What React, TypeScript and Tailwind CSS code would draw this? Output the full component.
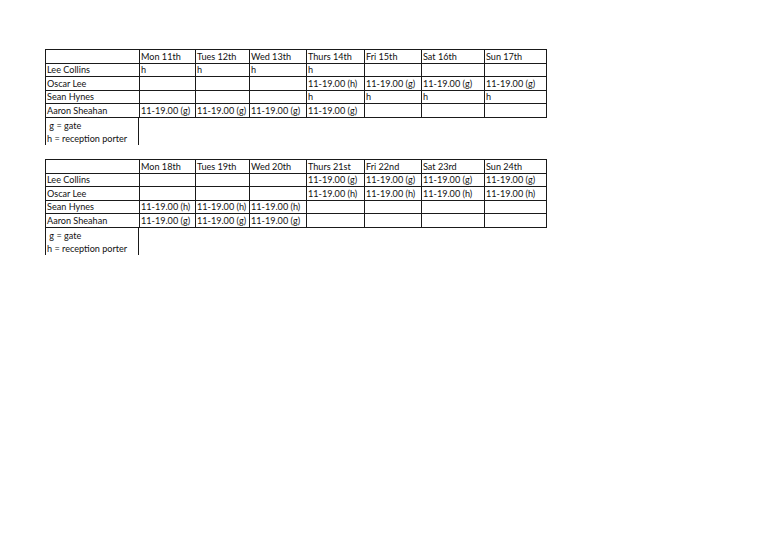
const widths = [94, 56, 54, 57, 58, 57, 63, 62];

type Week = {
  days: string[];
  rows: { name: string; cells: string[] }[];
};

const weeks: Week[] = [
  {
    days: ["Mon 11th", "Tues 12th", "Wed 13th", "Thurs 14th", "Fri 15th", "Sat 16th", "Sun 17th"],
    rows: [
      { name: "Lee Collins", cells: ["h", "h", "h", "h", "", "", ""] },
      { name: "Oscar Lee", cells: ["", "", "", "11-19.00 (h)", "11-19.00 (g)", "11-19.00 (g)", "11-19.00 (g)"] },
      { name: "Sean Hynes", cells: ["", "", "", "h", "h", "h", "h"] },
      { name: "Aaron Sheahan", cells: ["11-19.00 (g)", "11-19.00 (g)", "11-19.00 (g)", "11-19.00 (g)", "", "", ""] },
    ],
  },
  {
    days: ["Mon 18th", "Tues 19th", "Wed 20th", "Thurs 21st", "Fri 22nd", "Sat 23rd", "Sun 24th"],
    rows: [
      { name: "Lee Collins", cells: ["", "", "", "11-19.00 (g)", "11-19.00 (g)", "11-19.00 (g)", "11-19.00 (g)"] },
      { name: "Oscar Lee", cells: ["", "", "", "11-19.00 (h)", "11-19.00 (h)", "11-19.00 (h)", "11-19.00 (h)"] },
      { name: "Sean Hynes", cells: ["11-19.00 (h)", "11-19.00 (h)", "11-19.00 (h)", "", "", "", ""] },
      { name: "Aaron Sheahan", cells: ["11-19.00 (g)", "11-19.00 (g)", "11-19.00 (g)", "", "", "", ""] },
    ],
  },
];

const cell = "border border-[#1a1a1a] h-[13.6px] p-0 pl-px leading-[12px] align-bottom whitespace-nowrap overflow-hidden";

function WeekTable({ week }: { week: Week }) {
  return (
    <div>
      <table className="border-collapse table-fixed w-[502px]">
        <colgroup>
          {widths.map((w, i) => (
            <col key={i} style={{ width: w }} />
          ))}
        </colgroup>
        <tbody>
          <tr>
            <td className={cell}></td>
            {week.days.map((d) => (
              <td key={d} className={cell}>
                {d}
              </td>
            ))}
          </tr>
          {week.rows.map((r) => (
            <tr key={r.name}>
              <td className={cell}>{r.name}</td>
              {r.cells.map((c, i) => (
                <td key={i} className={cell}>
                  {c}
                </td>
              ))}
            </tr>
          ))}
        </tbody>
      </table>
      <div className="w-[94px] border-x border-[#1a1a1a] pl-px pt-px leading-[13.5px] h-[27px]">
        <div>&nbsp;g = gate</div>
        <div>h = reception porter</div>
      </div>
    </div>
  );
}

export default function App() {
  return (
    <div className="w-[768px] h-[543px] bg-white text-[#111] text-[9.1px] pl-[45px] pt-[49px] flex flex-col gap-[14px] font-['Lato',sans-serif]">
      {weeks.map((w, i) => (
        <WeekTable key={i} week={w} />
      ))}
    </div>
  );
}
